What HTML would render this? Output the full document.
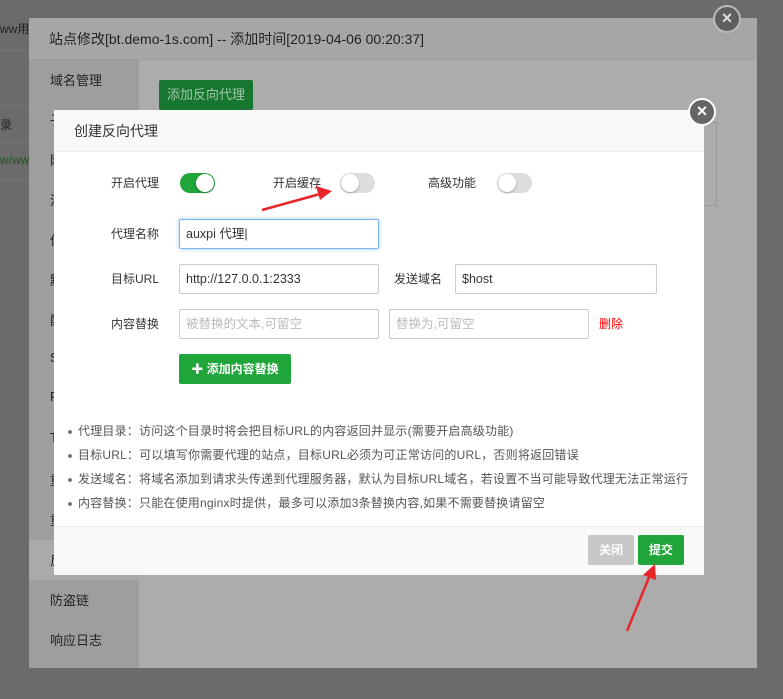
<!DOCTYPE html>
<html><head><meta charset="utf-8"><style>
*{margin:0;padding:0;box-sizing:border-box}
body{width:783px;height:699px;overflow:hidden;background:#6b6b6b;font-family:"Liberation Sans","Noto Sans CJK SC",sans-serif;font-size:12px;color:#333;position:relative}
.abs{position:absolute}
.outer{left:29px;top:18px;width:728px;height:650px;background:#acacac}
.ohead{left:0;top:0;width:728px;height:42px;background:#a6a6a6;border-bottom:1px solid #9c9c9c;font-size:14px;color:#222;padding:11px 20px}
.side{left:0;top:42px;width:110px;height:608px;background:#9e9e9e}
.side div{position:absolute;left:21px;font-size:13px;color:#222}
.x{width:28px;height:28px;border-radius:50%;background:#5f5f5f;border:2px solid #bbb;color:#ddd;text-align:center;line-height:22px;font-size:18px;font-weight:bold}
.modal{left:54px;top:110px;width:650px;height:465px;background:#fff}
.mhead{left:0;top:0;width:650px;height:42px;background:#f8f8f8;border-bottom:1px solid #eee;font-size:14px;padding:11px 20px;color:#333}
.lab{font-size:12px;color:#333;line-height:14px}
.tg{width:35px;height:20px;border-radius:10px;background:#ddd}
.tg i{position:absolute;top:1px;width:18px;height:18px;border-radius:50%;background:#fff;box-shadow:0 1px 2px rgba(0,0,0,.3)}
.inp{height:30px;border:1px solid #ccc;border-radius:2px;padding:0 6px;line-height:28px;font-size:12.5px;color:#333}
.ph{color:#bbb}
.tips{left:14px;font-size:12px;color:#555;line-height:14px;letter-spacing:0.2px}
.tips span{display:inline-block;width:4px;height:4px;border-radius:50%;background:#777;margin-right:6px;vertical-align:middle}
</style></head><body>
<div class="abs" style="left:0;top:20px;color:#222;font-size:12px">ww用</div>
<div class="abs" style="left:0;top:116px;color:#222">录</div>
<div class="abs" style="left:0;top:153px;color:#1a5a1a">w/www</div>
<div class="abs" style="left:0;top:50px;width:29px;height:1px;background:#777"></div>
<div class="abs" style="left:0;top:105px;width:29px;height:1px;background:#777"></div>
<div class="abs" style="left:0;top:142px;width:29px;height:1px;background:#777"></div>
<div class="abs" style="left:0;top:180px;width:29px;height:1px;background:#777"></div>

<div class="abs outer">
 <div class="abs ohead">站点修改[bt.demo-1s.com] -- 添加时间[2019-04-06 00:20:37]</div>
 <div class="abs side">
  <div style="top:480px;left:0;width:110px;height:40px;background:#aaa;position:absolute"></div>
  <div style="top:10px">域名管理</div>
  <div style="top:50px">子</div><div style="top:90px">网</div><div style="top:130px">流</div><div style="top:170px">伪</div>
  <div style="top:210px">默</div><div style="top:250px">配</div><div style="top:290px">S</div><div style="top:329px">F</div>
  <div style="top:370px">T</div><div style="top:410px">重</div><div style="top:450px">重</div>
  <div style="top:490px">反</div>
  <div style="top:530px">防盗链</div><div style="top:570px">响应日志</div>
 </div>
 <div class="abs" style="left:130px;top:62px;width:94px;height:30px;background:#17762f;border-radius:2px;color:#9fc7a8;font-size:13px;line-height:30px;text-align:center">添加反向代理</div>
 <div class="abs" style="left:660px;top:104px;width:28px;height:84px;border:1px solid #999;border-left:none"></div>
</div>
<div class="abs x" style="left:713px;top:5px">×</div>

<div class="abs modal">
 <div class="abs mhead">创建反向代理</div>
 <div class="abs lab" style="left:57px;top:66px">开启代理</div>
 <div class="abs tg" style="left:126px;top:63px;background:#20a53a"><i style="left:16px"></i></div>
 <div class="abs lab" style="left:219px;top:66px">开启缓存</div>
 <div class="abs tg" style="left:286px;top:63px"><i style="left:1px"></i></div>
 <div class="abs lab" style="left:374px;top:66px">高级功能</div>
 <div class="abs tg" style="left:443px;top:63px"><i style="left:1px"></i></div>

 <div class="abs lab" style="left:57px;top:117px">代理名称</div>
 <div class="abs inp" style="left:125px;top:109px;width:200px;border-color:#7db7ec;box-shadow:0 0 4px rgba(80,150,230,.5)">auxpi 代理|</div>
 <div class="abs lab" style="left:57px;top:162px">目标URL</div>
 <div class="abs inp" style="left:125px;top:154px;width:200px">http://127.0.0.1:2333</div>
 <div class="abs lab" style="left:340px;top:162px">发送域名</div>
 <div class="abs inp" style="left:401px;top:154px;width:202px">$host</div>
 <div class="abs lab" style="left:57px;top:207px">内容替换</div>
 <div class="abs inp ph" style="left:125px;top:199px;width:200px">被替换的文本,可留空</div>
 <div class="abs inp ph" style="left:335px;top:199px;width:200px">替换为,可留空</div>
 <div class="abs lab" style="left:545px;top:207px;color:#f00">删除</div>
 <div class="abs" style="left:125px;top:244px;width:112px;height:30px;background:#20a53a;border-radius:2px;color:#fff;font-size:12px;line-height:30px;text-align:center;font-weight:bold">✚ 添加内容替换</div>

 <div class="abs tips" style="top:314px"><span></span>代理目录：访问这个目录时将会把目标URL的内容返回并显示(需要开启高级功能)</div>
 <div class="abs tips" style="top:338px"><span></span>目标URL：可以填写你需要代理的站点，目标URL必须为可正常访问的URL，否则将返回错误</div>
 <div class="abs tips" style="top:362px"><span></span>发送域名：将域名添加到请求头传递到代理服务器，默认为目标URL域名，若设置不当可能导致代理无法正常运行</div>
 <div class="abs tips" style="top:386px"><span></span>内容替换：只能在使用nginx时提供，最多可以添加3条替换内容,如果不需要替换请留空</div>

 <div class="abs" style="left:0;top:416px;width:650px;height:49px;background:#f8f8f8;border-top:1px solid #eee"></div>
 <div class="abs" style="left:534px;top:425px;width:46px;height:30px;background:#c8c8c8;border-radius:2px;color:#fff;line-height:30px;text-align:center;font-weight:bold">关闭</div>
 <div class="abs" style="left:584px;top:425px;width:46px;height:30px;background:#20a53a;border-radius:2px;color:#fff;line-height:30px;text-align:center;font-weight:bold">提交</div>
</div>
<div class="abs x" style="left:688px;top:98px;background:#666;border-color:#fff;color:#fff">×</div>

<svg class="abs" style="left:0;top:0" width="783" height="699">
 <g stroke="#e8262a" stroke-width="2.5" fill="#e8262a">
  <line x1="262" y1="210" x2="320" y2="194"/>
  <polygon points="332,191 316,186 320,200" stroke="none"/>
  <line x1="627" y1="631" x2="650" y2="575"/>
  <polygon points="655,564 643,575 656,580" stroke="none"/>
 </g>
</svg>
</body></html>
